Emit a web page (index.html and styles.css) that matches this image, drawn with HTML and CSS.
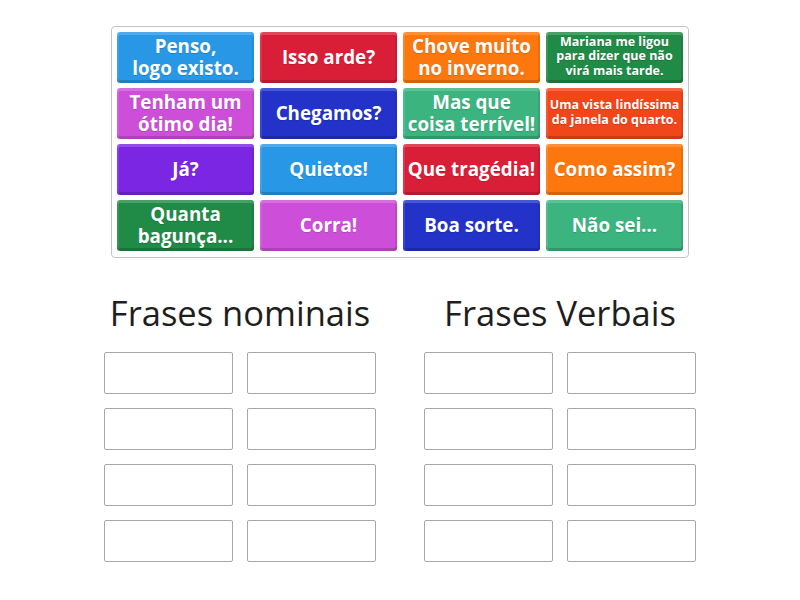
FILE: index.html
```html
<!DOCTYPE html>
<html lang="pt">
<head>
<meta charset="utf-8">
<title>Frases nominais e verbais</title>
<link rel="stylesheet" href="styles.css">
</head>
<body>
<div class="page">
  <div class="bank">
    <div class="tile blue">Penso,<br>logo existo.</div>
    <div class="tile red">Isso arde?</div>
    <div class="tile orange">Chove muito<br>no inverno.</div>
    <div class="tile dgreen small">Mariana me ligou<br>para dizer que não<br>virá mais tarde.</div>
    <div class="tile pink">Tenham um<br>ótimo dia!</div>
    <div class="tile dblue">Chegamos?</div>
    <div class="tile teal">Mas que<br>coisa terrível!</div>
    <div class="tile ored small">Uma vista lindíssima<br>da janela do quarto.</div>
    <div class="tile purple">Já?</div>
    <div class="tile blue">Quietos!</div>
    <div class="tile red">Que tragédia!</div>
    <div class="tile orange">Como assim?</div>
    <div class="tile dgreen">Quanta<br>bagunça...</div>
    <div class="tile pink">Corra!</div>
    <div class="tile dblue">Boa sorte.</div>
    <div class="tile teal">Não sei…</div>
  </div>
  <div class="groups">
    <div class="group">
      <h2 class="title">Frases nominais</h2>
      <div class="slots">
        <div class="slot"></div><div class="slot"></div>
        <div class="slot"></div><div class="slot"></div>
        <div class="slot"></div><div class="slot"></div>
        <div class="slot"></div><div class="slot"></div>
      </div>
    </div>
    <div class="group">
      <h2 class="title">Frases Verbais</h2>
      <div class="slots">
        <div class="slot"></div><div class="slot"></div>
        <div class="slot"></div><div class="slot"></div>
        <div class="slot"></div><div class="slot"></div>
        <div class="slot"></div><div class="slot"></div>
      </div>
    </div>
  </div>
</div>
</body>
</html>
```

FILE: styles.css
```css
html, body {
  margin: 0;
  padding: 0;
  background: #ffffff;
  font-family: "Open Sans", "DejaVu Sans", sans-serif;
}

.page {
  padding-top: 26px;
}

.bank {
  box-sizing: border-box;
  width: 578px;
  margin: 0 auto;
  border: 1px solid #c4c4c4;
  border-radius: 4px;
  padding: 5px 5px 6px 5px;
  display: grid;
  grid-template-columns: repeat(4, 137px);
  grid-auto-rows: 51px;
  column-gap: 6px;
  row-gap: 5px;
}

.tile {
  display: flex;
  align-items: center;
  justify-content: center;
  text-align: center;
  color: #ffffff;
  font-weight: 700;
  font-size: 18.8px;
  line-height: 22px;
  padding-bottom: 2px;
  box-sizing: border-box;
  border-radius: 3px;
  box-shadow:
    inset 0 3px 0 rgba(255, 255, 255, 0.18),
    inset 2px 0 0 rgba(255, 255, 255, 0.10),
    inset -2px 0 0 rgba(0, 0, 0, 0.08),
    inset 0 -3px 0 rgba(0, 0, 0, 0.16);
  text-shadow: 0 1px 1px rgba(0, 0, 0, 0.15);
  white-space: nowrap;
}

.tile.small {
  font-size: 12.5px;
  line-height: 14.5px;
}

.blue { background: #2898e6; }
.red { background: #d91f38; }
.orange { background: #fc780e; }
.dgreen { background: #208b46; }
.pink { background: #cd4fd9; }
.dblue { background: #2333c9; }
.teal { background: #3bb47f; }
.ored { background: #f1461a; }
.purple { background: #7a26e3; }

.groups {
  display: flex;
  justify-content: center;
  gap: 48px;
  margin-top: 35px;
}

.group {
  width: 272px;
}

.title {
  margin: 0 0 19px 0;
  font-size: 34.5px;
  line-height: 40px;
  font-weight: 400;
  color: #1e1e1e;
  text-align: center;
  white-space: nowrap;
}

.slots {
  display: grid;
  grid-template-columns: 129px 129px;
  grid-auto-rows: 42px;
  column-gap: 14px;
  row-gap: 14px;
}

.slot {
  box-sizing: border-box;
  border: 1px solid #a8a8a8;
  border-radius: 2px;
  background: #ffffff;
}
```
